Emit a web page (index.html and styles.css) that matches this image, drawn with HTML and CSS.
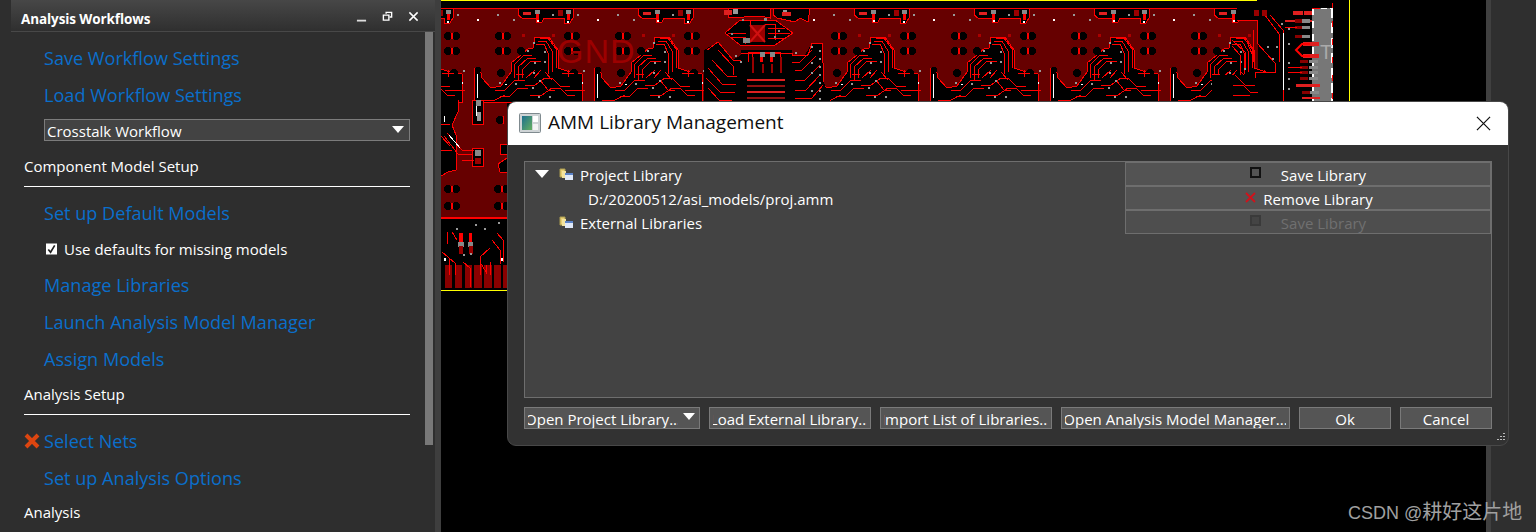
FILE: index.html
```html
<!DOCTYPE html>
<html lang="en">
<head>
<meta charset="utf-8">
<title>AMM Library Management</title>
<link rel="stylesheet" href="styles.css">
</head>
<body>
<div class="app">
  <aside class="panel">
    <header class="panel-title">
      <span class="panel-name">Analysis Workflows</span>
      <div class="win-btns">
        <svg class="wb" viewBox="0 0 12 12"><path d="M1 10.5H11" stroke="#ddd" stroke-width="2" fill="none"/></svg>
        <svg class="wb" viewBox="0 0 12 12"><path d="M4.5 3V1.5H10.5V6.5H8.5M1.5 4.5H7.5V10H1.5Z" stroke="#fff" stroke-width="1.5" fill="none"/></svg>
        <svg class="wb" viewBox="0 0 12 12"><path d="M1.5 1.5L10.5 10.5M10.5 1.5L1.5 10.5" stroke="#fff" stroke-width="1.6" fill="none"/></svg>
      </div>
    </header>
    <div class="panel-body">
      <div class="flow">
        <a class="link">Save Workflow Settings</a>
        <a class="link">Load Workflow Settings</a>
        <div class="combo"><span>Crosstalk Workflow</span><i class="tri combo-tri"></i></div>
        <div class="head">Component Model Setup</div>
        <div class="rule"></div>
        <a class="link">Set up Default Models</a>
        <label class="check">
          <svg class="box" viewBox="0 0 12 12"><rect width="12" height="12" fill="#fff"/><path d="M2.5 6.5L5 9.5L9.5 2" stroke="#222" stroke-width="1.8" fill="none"/></svg>
          <span>Use defaults for missing models</span>
        </label>
        <a class="link">Manage Libraries</a>
        <a class="link">Launch Analysis Model Manager</a>
        <a class="link">Assign Models</a>
        <div class="head head-setup">Analysis Setup</div>
        <div class="rule"></div>
        <a class="link link-x">
          <svg class="xmark" viewBox="0 0 16 16"><path d="M2 2L14 14M14 2L2 14" stroke="#dc4510" stroke-width="4" fill="none"/></svg>
          <span>Select Nets</span>
        </a>
        <a class="link">Set up Analysis Options</a>
        <div class="head">Analysis</div>
      </div>
      <div class="scroll"><div class="thumb"></div></div>
    </div>
  </aside>

  <main class="canvas">
    <svg class="pcb" viewBox="441 0 1045 532" width="1045" height="532">
      <defs>
        <g id="vp"><circle cx="-4" r="4" fill="#000"/><circle cx="4" r="4" fill="#000"/><rect x="-1" y="-3" width="2" height="6" fill="#f00"/></g>
        <g id="mod">
          <path class="void-r" d="M518,8V15L522,18H536V22H542L544,18H564V23H570L573,18V8Z"/>
          <rect x="523" y="12" width="8" height="3" fill="#e02020"/>
          <rect x="535" y="10" width="5" height="4" fill="#888"/><rect x="536" y="14" width="3" height="6" fill="#f00"/>
          <rect x="558" y="10" width="5" height="6" fill="#900"/>
          <rect x="566" y="10" width="5" height="4" fill="#888"/><rect x="567" y="14" width="3" height="6" fill="#f00"/>
          <use href="#vp" x="503" y="36"/><use href="#vp" x="503" y="51"/>
          <use href="#vp" x="572" y="36"/><use href="#vp" x="572" y="51"/>
          <rect x="522" y="34" width="3" height="3" fill="#a00"/><rect x="552" y="34" width="3" height="3" fill="#a00"/>
          <rect x="477" y="19" width="2" height="2" fill="#fff"/><rect x="537" y="20" width="2" height="2" fill="#fff"/>
          <rect x="567" y="21" width="2" height="2" fill="#fff"/>
          <rect x="457" y="14" width="2" height="2" fill="#999"/><rect x="497" y="14" width="2" height="2" fill="#999"/>
          <rect x="513" y="19" width="2" height="2" fill="#999"/><rect x="552" y="14" width="2" height="2" fill="#999"/>
          <polygon class="void-r" points="474,68 480,68 482,78 491,88 501,86 511,72 511,63 521,55 529,48 533,48 535,37 549,37 558,50 558,68 570,72 582,74 582,102 474,102"/>
          <circle cx="478" cy="70" r="3" fill="#000"/><circle cx="501" cy="73" r="4" fill="#000"/><circle cx="574" cy="73" r="4" fill="#000"/><circle cx="521" cy="51" r="4" fill="#000"/><circle cx="576" cy="98" r="4" fill="#000"/><circle cx="573" cy="82" r="3" fill="#000"/>
          <path class="tr" d="M514,78V65L524,55H532M518,80V67L528,58H536M522,78V70L531,61H541M540,38H548L556,49V68M538,41H546L552,51V72M536,44H544L548,53V74M526,78L535,70M541,70L534,78"/>
          <path class="tr" d="M495,90H505L515,80H525M500,96H510L518,88H528M525,85H535L545,78H552L560,86H570M530,95H542L552,88H560L567,95H575M482,100H495L505,95M540,80L548,90H555M516,74H524M545,72L552,80M565,90H585M568,70V77M562,73H574"/>
          <path class="wh" d="M477,74V98M582,82V84M505,84H507"/>
          <g fill="#999"><rect x="533" y="42" width="2" height="2"/><rect x="527" y="50" width="2" height="2"/><rect x="544" y="51" width="2" height="2"/><rect x="534" y="62" width="2" height="2"/><rect x="544" y="61" width="2" height="2"/><rect x="533" y="72" width="2" height="2"/><rect x="539" y="80" width="2" height="2"/><rect x="532" y="87" width="2" height="2"/><rect x="538" y="96" width="2" height="2"/><rect x="499" y="82" width="2" height="2"/><rect x="549" y="96" width="2" height="2"/><rect x="515" y="83" width="2" height="2"/><rect x="463" y="70" width="2" height="2"/><rect x="583" y="70" width="2" height="2"/></g>
        </g>
      </defs>

      <rect x="441" y="0" width="908" height="1" fill="#ff0"/>
      <rect x="441" y="8" width="817" height="94" fill="#660000"/>
      <rect x="441" y="8" width="817" height="1" fill="#f00"/>
      <rect x="441" y="102" width="66" height="116" fill="#660000"/>

      <use href="#mod" x="-120"/><use href="#mod"/><use href="#mod" x="120"/>
      <use href="#mod" x="336"/><use href="#mod" x="456"/><use href="#mod" x="576"/><use href="#mod" x="696"/>

      <text class="silk" x="557" y="63">GND</text>

      <!-- centre IC -->
      <polygon points="704,102 704,50 718,42 733,60 741,55 741,50 792,50 793,55 805,55 812,43 823,43 824,82 830,102" fill="#000"/>
      <path class="tr" d="M707,50L718,42L733,60L741,60M741,53H792V55H808L812,43H822L824,82M718,50L733,66V75M712,60L727,76H737M708,68L722,84H736M706,78L720,92H735M708,88L719,100H732M812,50L800,62H792M816,56L802,70H795M820,65L805,80H795M820,75L806,90H795M823,85L812,98H795"/>
      <polygon class="void-r" points="725,33 740,20 775,20 793,33 775,45 740,45"/>
      <polygon class="void-r" points="773,8 773,15 777,18 795,22 800,18 808,22 810,8 773,8" />
      <polygon class="void-r" points="728,8 728,18 760,16 770,18 770,8" fill="#000"/>
      <rect x="750" y="25" width="15" height="17" fill="#990000"/>
      <path d="M750,25L765,42M765,25L750,42" stroke="#d01010" stroke-width="2" shape-rendering="auto"/>
      <path class="tr" d="M740,20H750V25M765,24H775V40M728,33H746M768,28H785M768,33H790M768,38H785M730,37H746M745,44V40"/>
      <g fill="#888"><rect x="743" y="38" width="7" height="5"/><rect x="742" y="19" width="2" height="2"/><rect x="764" y="18" width="3" height="3"/><rect x="778" y="30" width="2" height="2"/><rect x="731" y="33" width="2" height="2"/><rect x="774" y="36" width="2" height="2"/></g>
      <rect x="724" y="10" width="8" height="5" fill="#e02020"/><rect x="782" y="12" width="9" height="4" fill="#e02020"/><rect x="783" y="10" width="4" height="2" fill="#999"/><rect x="733" y="9" width="5" height="5" fill="#999"/>
      <path class="tr" d="M748,62V52H780V60M752,52V58M762,52V58M772,52V58"/>
      <g fill="#888"><rect x="760" y="52" width="5" height="5"/><rect x="770" y="52" width="5" height="5"/></g>
      <rect x="760" y="57" width="3" height="5" fill="#f00"/><rect x="770" y="57" width="3" height="5" fill="#f00"/>
      <rect x="752" y="57" width="2" height="16" fill="#900"/><rect x="762" y="64" width="2" height="9" fill="#900"/><rect x="771" y="64" width="2" height="9" fill="#900"/><rect x="780" y="57" width="2" height="16" fill="#900"/>
      <rect x="747" y="79" width="38" height="2" fill="#e02020"/><rect x="747" y="85" width="38" height="2" fill="#901010"/><rect x="747" y="91" width="38" height="2" fill="#e02020"/><rect x="747" y="97" width="38" height="2" fill="#901010"/>
      <g fill="#999"><rect x="811" y="46" width="2" height="2"/><rect x="819" y="50" width="2" height="2"/><rect x="819" y="58" width="2" height="2"/><rect x="811" y="62" width="2" height="2"/><rect x="819" y="66" width="2" height="2"/><rect x="811" y="72" width="2" height="2"/><rect x="819" y="74" width="2" height="2"/><rect x="819" y="82" width="2" height="2"/><rect x="811" y="90" width="2" height="2"/><rect x="819" y="90" width="2" height="2"/><rect x="819" y="98" width="2" height="2"/><rect x="735" y="55" width="2" height="2"/><rect x="740" y="61" width="2" height="2"/><rect x="795" y="52" width="2" height="2"/></g>

      <!-- right end block -->
      <path d="M1257,0H1349V102H1212V75H1255V72H1275V63L1257,43V20H1237V8H1257Z" fill="#000"/>
      <path class="tr" d="M1257,20H1237M1257,20V43L1275,63V72H1255V78M1270,15L1283,30V102M1265,15L1279,34V62M1253,30V62M1248,45L1255,60M1232,40L1245,52V70M1232,46L1240,55V75M1235,75L1245,85H1255M1233,85H1243L1250,92H1258M1233,95H1250"/>
      <path class="wh" d="M1283,33V90"/>
      <rect x="1254" y="10" width="5" height="6" fill="#900"/><rect x="1262" y="10" width="5" height="6" fill="#900"/>
      <g fill="#999"><rect x="1281" y="23" width="2" height="2"/><rect x="1288" y="28" width="2" height="2"/><rect x="1288" y="43" width="2" height="2"/><rect x="1288" y="62" width="2" height="2"/><rect x="1288" y="78" width="2" height="2"/><rect x="1288" y="88" width="2" height="2"/><rect x="1267" y="46" width="2" height="2"/><rect x="1276" y="46" width="2" height="2"/><rect x="1244" y="68" width="2" height="2"/><rect x="1272" y="58" width="2" height="2"/></g>
      <rect x="1312" y="8" width="21" height="94" fill="#777"/>
      <path d="M1313,8V102" stroke="#fff" stroke-width="2" stroke-dasharray="7 6"/>
      <path d="M1332,8V102" stroke="#fff" stroke-width="2" stroke-dasharray="10 5"/>
      <path d="M1332,3V102" stroke="#f00" stroke-width="1" stroke-dasharray="6 12"/>
      <path d="M1312,8.500H1333" stroke="#fff" stroke-dasharray="6 3"/><path d="M1312,8.500H1320" stroke="#f00"/>
      <text class="t-silk" x="1320" y="59">T</text>
      <g class="padrow">
        <rect x="1293" y="11" width="10" height="4" fill="#e02020"/><rect x="1304" y="11" width="8" height="4" fill="#e02020"/>
        <rect x="1285" y="20" width="27" height="2" fill="#e02020"/><rect x="1295" y="19" width="8" height="4" fill="#800"/><rect x="1302" y="19" width="8" height="4" fill="#888"/>
        <rect x="1295" y="26" width="8" height="3" fill="#800"/><rect x="1302" y="26" width="8" height="3" fill="#888"/><rect x="1285" y="27" width="12" height="1" fill="#f00"/>
        <rect x="1295" y="35" width="8" height="3" fill="#800"/><rect x="1302" y="35" width="8" height="3" fill="#888"/>
        <rect x="1303" y="42" width="16" height="4" fill="#e02020"/><rect x="1303" y="54" width="16" height="4" fill="#e02020"/>
        <path d="M1310,44H1302L1296,50L1302,56H1310" stroke="#f00" stroke-width="2" fill="none" shape-rendering="auto"/>
        <rect x="1300" y="60" width="8" height="3" fill="#800"/><rect x="1309" y="60" width="9" height="3" fill="#888"/>
        <rect x="1300" y="66" width="8" height="3" fill="#800"/><rect x="1309" y="66" width="9" height="3" fill="#888"/><rect x="1288" y="67" width="14" height="1" fill="#f00"/>
        <rect x="1300" y="71" width="8" height="3" fill="#800"/><rect x="1309" y="71" width="9" height="3" fill="#888"/><rect x="1288" y="72" width="14" height="1" fill="#f00"/>
        <rect x="1300" y="77" width="8" height="3" fill="#800"/><rect x="1309" y="77" width="9" height="3" fill="#888"/>
        <rect x="1296" y="84" width="24" height="3" fill="#e02020"/><rect x="1302" y="91" width="8" height="3" fill="#800"/><rect x="1310" y="91" width="9" height="3" fill="#888"/><rect x="1302" y="97" width="18" height="2" fill="#e02020"/>
      </g>
      <rect x="1349" y="0" width="1" height="102" fill="#ff0"/>

      <!-- left column below the top strip -->
      <polygon points="441,100 458,100 458,112 452,125 456,135 456,170 448,172 441,176" fill="#000"/>
      <path class="tr" d="M458,100V112L452,125L456,135V170L448,172L441,176M441,124H450M441,136L450,146M441,150H452"/>
      <rect x="472.500" y="100.500" width="11" height="24" class="void-r"/>
      <rect x="476" y="100" width="5" height="6" fill="#888"/><rect x="477" y="112" width="4" height="9" fill="#999"/><rect x="476" y="106" width="1" height="10" fill="#fff"/>
      <rect x="472.500" y="148.500" width="11" height="18" class="void-r"/>
      <rect x="475" y="150" width="6" height="6" fill="#888"/><rect x="475" y="158" width="6" height="6" fill="#900"/>
      <path class="tr" d="M447,133L462,150H474M444,136L458,154H472M462,160H474"/>
      <path class="wh" d="M449,135L460,148M444,116V122"/>
      <circle cx="500" cy="120" r="4" fill="#000"/><path class="tr" d="M503,116V124"/>
      <path class="void-r" d="M500,144H507V154H500ZM498,164L507,158V172H500Z"/>
      <use href="#vp" x="452" y="189"/><use href="#vp" x="452" y="206"/><use href="#vp" x="502" y="189"/><use href="#vp" x="502" y="206"/>
      <rect x="441" y="217" width="66" height="2" fill="#f00"/>
      <rect x="441" y="219" width="66" height="71" fill="#000"/>
      <g fill="#8a0000"><rect x="445" y="265" width="7" height="23"/><rect x="455" y="265" width="7" height="23"/><rect x="465" y="265" width="7" height="23"/><rect x="474" y="265" width="8" height="23"/><rect x="484" y="265" width="8" height="23"/><rect x="494" y="265" width="7" height="23"/><rect x="503" y="265" width="4" height="23"/></g>
      <rect x="459" y="233" width="4" height="10" fill="#f00"/><rect x="469" y="233" width="3" height="10" fill="#f00"/>
      <rect x="458" y="242" width="6" height="5" fill="#888"/><rect x="468" y="242" width="5" height="5" fill="#888"/>
      <rect x="459" y="246" width="4" height="8" fill="#900"/><rect x="469" y="246" width="4" height="8" fill="#900"/>
      <path class="tr" d="M442,252L455,263V275M449,258V275M463,262L470,268V287M486,265V272L480,262M480,275V257L490,248M447,232V244M457,240L452,232M492,240L500,250V264M497,233L503,240V262M507,250V262M490,262V275"/>
      <g fill="#999"><rect x="456" y="228" width="2" height="2"/><rect x="475" y="224" width="2" height="2"/><rect x="484" y="228" width="2" height="2"/><rect x="498" y="222" width="2" height="2"/><rect x="463" y="254" width="2" height="2"/><rect x="470" y="253" width="2" height="2"/></g>
      <rect x="444" y="258" width="2" height="3" fill="#fff"/><rect x="501" y="258" width="2" height="3" fill="#fff"/>
      <rect x="441" y="290" width="66" height="1" fill="#ff0"/>
    </svg>
  </main>
  <div class="strip"></div>
  <div class="rest"></div>
</div>

<section class="dialog">
  <header class="dlg-title">
    <svg class="dlg-icon" viewBox="0 0 22 20">
      <defs><linearGradient id="ig" x1="0" y1="0" x2="1" y2="1"><stop offset="0" stop-color="#1d6f8f"/><stop offset="1" stop-color="#67b060"/></linearGradient></defs>
      <rect x="0.500" y="0.500" width="21" height="19" rx="1" fill="#cfd4d6" stroke="#7f8a8f"/>
      <rect x="3" y="3" width="10" height="14" fill="url(#ig)"/>
      <rect x="14" y="3" width="5" height="6" fill="#fff"/><rect x="14" y="11" width="5" height="6" fill="#f4f4f4"/>
    </svg>
    <span class="dlg-name">AMM Library Management</span>
    <svg class="dlg-close" viewBox="0 0 16 16"><path d="M1 1L15 15M15 1L1 15" stroke="#111" stroke-width="1.3" fill="none"/></svg>
  </header>
  <div class="dlg-body">
    <div class="treebox">
      <div class="tree">
        <div class="tree-row">
          <i class="tri tree-tri"></i>
          <svg class="folder" viewBox="0 0 14 13"><path d="M1 1H6V9H1Z" fill="#e8cf72" stroke="#a89a50"/><path d="M3 3H7V10H3Z" fill="#f2e3a0"/><rect x="6" y="5" width="8" height="7" fill="#dfe8f8"/><rect x="6" y="5" width="8" height="2" fill="#5b83c8"/></svg>
          <span>Project Library</span>
        </div>
        <div class="tree-row child"><span>D:/20200512/asi_models/proj.amm</span></div>
        <div class="tree-row">
          <i class="tree-gap"></i>
          <svg class="folder" viewBox="0 0 14 13"><path d="M1 1H6V9H1Z" fill="#e8cf72" stroke="#a89a50"/><path d="M3 3H7V10H3Z" fill="#f2e3a0"/><rect x="6" y="5" width="8" height="7" fill="#dfe8f8"/><rect x="6" y="5" width="8" height="2" fill="#5b83c8"/></svg>
          <span>External Libraries</span>
        </div>
      </div>
      <div class="side">
        <div class="side-btn"><i class="sq"></i><span>Save Library</span></div>
        <div class="side-btn btn-rm">
          <svg class="rm-x" viewBox="0 0 11 11"><path d="M1 1L10 10M10 1L1 10" stroke="#d0121b" stroke-width="1.800" fill="none"/></svg>
          <span>Remove Library</span>
        </div>
        <div class="side-btn off"><i class="sq"></i><span>Save Library</span></div>
      </div>
    </div>
    <div class="actions">
      <div class="btn b1"><div class="clipbox"><span class="clip">Open Project Library...</span></div><i class="tri btn-tri"></i></div>
      <div class="btn b2"><div class="clipbox"><span class="clip">Load External Library...</span></div></div>
      <div class="btn b3"><div class="clipbox"><span class="clip">Import List of Libraries...</span></div></div>
      <div class="btn b4"><div class="clipbox"><span class="clip">Open Analysis Model Manager...</span></div></div>
      <div class="btn b5"><div class="clipbox"><span class="clip">Ok</span></div></div>
      <div class="btn b5"><div class="clipbox"><span class="clip">Cancel</span></div></div>
    </div>
  </div>
  <svg class="grip" viewBox="0 0 10 10"><g fill="#bbb"><rect x="7" y="0" width="2" height="1"/><rect x="4" y="3" width="2" height="1"/><rect x="7" y="3" width="2" height="1"/><rect x="1" y="6" width="2" height="1"/><rect x="4" y="6" width="2" height="1"/><rect x="7" y="6" width="2" height="1"/></g></svg>
</section>

<div class="watermark">CSDN @<span class="wm-cjk">耕好这片地</span></div>
</body>
</html>
```

FILE: styles.css
```css
* { box-sizing: border-box; }
html, body { margin: 0; height: 100%; overflow: hidden; background: #000; }
body { font-family: "Open Sans", "Noto Sans", sans-serif; font-size: 15px; color: #fff; }

.app { display: flex; height: 532px; width: 1536px; }

/* left panel */
.panel { width: 441px; flex: none; display: flex; flex-direction: column; background: #2e2e2e; padding-left: 11px; border-right: 6px solid #3e3e3e; }
.panel-title { height: 32px; flex: none; display: flex; align-items: center; justify-content: space-between; padding: 7px 16px 0 10px; background: linear-gradient(#474747, #2f2f2f); border-bottom: 1px solid #484848; }
.panel-name { font-weight: 700; font-size: 13.500px; letter-spacing: -0.1px; }
.win-btns { display: flex; gap: 15px; margin-top: -6px; }
.wb { width: 11px; height: 11px; display: block; }
.panel-body { flex: 1; display: flex; min-height: 0; }
.flow { flex: 1; padding: 7px 15px 0 13px; display: flex; flex-direction: column; }
.link { height: 37px; flex: none; display: flex; align-items: center; padding-left: 20px; color: #0a6fcb; font-size: 18.100px; white-space: nowrap; }
.link-x { padding-left: 0; gap: 4px; }
.xmark { width: 16px; height: 16px; display: block; }
.combo { height: 22px; flex: none; margin: 6px 0 13px 20px; display: flex; align-items: center; justify-content: space-between; padding: 1px 5px 0 2px; background: #434343; border: 1px solid #7c7c7c; }
.tri { display: block; width: 0; height: 0; border-style: solid; border-color: #fff transparent transparent; }
.combo-tri { border-width: 7px 6px 0; margin-top: -3px; }
.head { height: 24px; flex: none; display: flex; align-items: center; margin-top: 4px; white-space: nowrap; }
.combo + .head { margin-top: 0; }
.head-setup { margin-top: 5px; }
.rule { height: 1px; flex: none; background: #fff; margin: 8px 0 7px; }
.check { height: 35px; flex: none; display: flex; align-items: center; padding-left: 22px; gap: 7px; }
.box { width: 11px; height: 12px; display: block; }
.scroll { width: 8px; flex: none; margin-right: 2px; }
.thumb { height: 413px; background: #787878; }

/* canvas */
.canvas { flex: 1; background: #000; min-width: 0; }
.pcb { display: block; shape-rendering: crispEdges; }
.tr { fill: none; stroke: #f00; stroke-width: 1; }
.wh { fill: none; stroke: #fff; stroke-width: 1; }
.void-r { fill: #000; stroke: #f00; stroke-width: 1; }
.silk { font-family: "Liberation Sans", sans-serif; font-size: 34px; fill: #9c0000; letter-spacing: 1px; }
.t-silk { font-family: "Liberation Sans", sans-serif; font-size: 20px; fill: #aaa; }
.strip { width: 5px; flex: none; background: #404040; }
.rest { width: 45px; flex: none; background: #2f2f2f; }

/* dialog */
.dialog { position: absolute; left: 507px; top: 101px; width: 1002px; height: 345px; display: flex; flex-direction: column; border: 1px solid #484848; border-radius: 9px; background: #323232; overflow: hidden; }
.dlg-title { height: 43px; flex: none; display: flex; align-items: center; padding: 0 17px 3px 11px; background: #fff; color: #111; }
.dlg-icon { width: 22px; height: 20px; display: block; margin-top: 2px; }
.dlg-name { font-size: 19px; margin-left: 7px; flex: 1; color: #101010; }
.dlg-close { width: 15px; height: 15px; display: block; margin-top: 3px; }
.dlg-body { flex: 1; padding: 16px 16px 0; display: flex; flex-direction: column; }
.treebox { height: 237px; flex: none; display: flex; background: #434343; border: 1px solid #6e6e6e; }
.tree { flex: 1; padding-top: 1px; }
.tree-row { height: 24px; display: flex; align-items: center; padding-left: 10px; white-space: nowrap; }
.tree-tri { border-width: 8px 7px 0; margin-right: 10px; margin-top: -2px; }
.tree-gap { width: 24px; }
.folder { width: 14px; height: 13px; margin: -2px 7px 0 0; display: block; }
.child { padding-left: 63px; }
.side { width: 366px; flex: none; display: flex; flex-direction: column; }
.side-btn { height: 24px; display: flex; align-items: center; justify-content: center; gap: 20px; padding-top: 2px; background: #535353; border: 1px solid #6e6e6e; }
.sq { display: block; width: 11px; height: 11px; border: 2px solid #111; margin-top: -5px; }
.btn-rm { gap: 7px; padding-left: 2px; }
.rm-x { width: 11px; height: 11px; display: block; margin-top: -4px; }
.off { color: #707070; background: #4e4e4e; }
.off .sq { border-color: #3a3a3a; background: #444; }
.actions { height: 22px; flex: none; margin-top: 9px; display: flex; gap: 9px; }
.btn { height: 22px; display: flex; align-items: center; background: #555; border: 1px solid #7a7a7a; white-space: nowrap; }
.clipbox { flex: 1; min-width: 0; height: 100%; margin: 0 3px; display: flex; align-items: center; justify-content: center; overflow: hidden; }
.clip { flex: none; padding-top: 1px; }
.b1 { width: 176px; }
.btn-tri { border-width: 7px 6px 0; flex: none; margin: -3px 4px 0 2px; }
.b2 { width: 162px; }
.b3 { width: 172px; }
.b4 { width: 229px; }
.b5 { width: 92px; }
.grip { position: absolute; right: 2px; bottom: 2px; width: 10px; height: 10px; }

/* watermark */
.watermark { position: absolute; left: 1348px; top: 496px; font-family: "Liberation Sans", "Noto Sans CJK SC", sans-serif; font-size: 18px; color: #a0a0a0; white-space: nowrap; }
.wm-cjk { font-size: 20px; }
```
